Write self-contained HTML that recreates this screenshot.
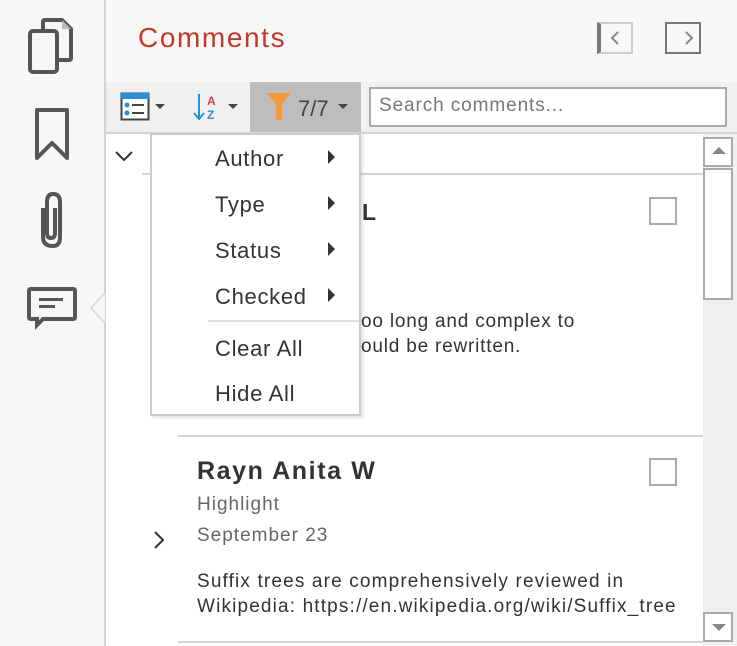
<!DOCTYPE html>
<html><head><style>
*{margin:0;padding:0;box-sizing:border-box}
body{width:737px;height:646px;overflow:hidden;background:#f7f7f7;font-family:"Liberation Sans",sans-serif;position:relative;color:#333}
.abs{position:absolute}
.t{position:absolute;white-space:nowrap}
.m{font-size:22px;color:#333;letter-spacing:0.7px}
</style></head><body>
<!-- sidebar -->
<div class="abs" style="left:104px;top:0;width:2px;height:646px;background:#d4d4d4"></div>
<svg class="abs" style="left:24px;top:16px" width="52" height="60" viewBox="0 0 52 60">
<path d="M19 13 V6 Q19 4 21 4 H38 L47 13 V42 Q47 44 45 44 H35" fill="none" stroke="#555" stroke-width="4"/>
<path d="M38 4 L47 13 H38Z" fill="#bbb"/>
<rect x="6" y="15" width="27" height="41" rx="3" fill="none" stroke="#555" stroke-width="4"/>
</svg>
<svg class="abs" style="left:34px;top:107px" width="36" height="54" viewBox="0 0 36 54"><path d="M3 3 H33 V51 L18 36 L3 51Z" fill="none" stroke="#555" stroke-width="4" stroke-linejoin="round"/></svg>
<svg class="abs" style="left:38px;top:190px" width="30" height="60" viewBox="0 0 30 60"><path d="M17 18 V43 Q17 48 13 48 Q9 48 9 43 V12 Q9 4 15 4 Q22 4 22 12 V47 Q22 56 15 56 Q5 56 5 47 V18" fill="none" stroke="#555" stroke-width="4"/></svg>
<svg class="abs" style="left:27px;top:287px" width="50" height="50" viewBox="0 0 50 50"><path d="M4 2 H46 Q48 2 48 4 V30 Q48 32 46 32 H16 L10 38 V32 H4 Q2 32 2 30 V4 Q2 2 4 2Z" fill="none" stroke="#555" stroke-width="4"/><rect x="12" y="11" width="24" height="3" fill="#555"/><rect x="12" y="18" width="16" height="3" fill="#555"/></svg>
<svg class="abs" style="left:89px;top:292px" width="17" height="32"><path d="M16 1 L2 16 L16 31" fill="#f7f7f7" stroke="#d4d4d4" stroke-width="1.5"/></svg>
<!-- header -->
<div class="t" style="left:138px;top:22px;font-size:28px;color:#c0392b;letter-spacing:1.6px">Comments</div>
<div class="abs" style="left:597px;top:22px;width:36px;height:32px;border:2px solid #ccc;border-left:4px solid #777"></div>
<svg class="abs" style="left:609px;top:30px" width="12" height="16"><path d="M9 2 L3 8 L9 14" fill="none" stroke="#888" stroke-width="2"/></svg>
<div class="abs" style="left:665px;top:22px;width:36px;height:32px;border:2px solid #777"></div>
<svg class="abs" style="left:683px;top:30px" width="12" height="16"><path d="M3 2 L9 8 L3 14" fill="none" stroke="#888" stroke-width="2"/></svg>
<!-- toolbar -->
<div class="abs" style="left:106px;top:82px;width:631px;height:52px;background:#f0f0f0;border-bottom:2px solid #d4d4d4"></div>
<svg class="abs" style="left:120px;top:92px" width="50" height="30"><rect x="1.5" y="1.5" width="27" height="26" fill="#fff" stroke="#444" stroke-width="2"/><rect x="1" y="1" width="28" height="6" fill="#2a8fd6"/><circle cx="7" cy="13" r="2.5" fill="#2a8fd6"/><circle cx="7" cy="21" r="2.5" fill="#2a8fd6"/><rect x="12" y="12" width="12" height="2" fill="#444"/><rect x="12" y="20" width="12" height="2" fill="#444"/><path d="M35 12 H45 L40 17Z" fill="#444"/></svg>
<svg class="abs" style="left:192px;top:92px" width="50" height="30"><path d="M7 2 V26 M2 21 L7 27 L12 21" fill="none" stroke="#2a8fd6" stroke-width="2"/><text x="15" y="13" font-family="Liberation Sans" font-size="12" font-weight="bold" fill="#e04040">A</text><text x="15" y="27" font-family="Liberation Sans" font-size="12" font-weight="bold" fill="#2a8fd6">Z</text><path d="M36 12 H46 L41 17Z" fill="#444"/></svg>
<div class="abs" style="left:250px;top:82px;width:111px;height:50px;background:#bdbdbb"></div>
<svg class="abs" style="left:266px;top:93px" width="28" height="28"><path d="M1 0 H25 L16 11 V27 H10 V11Z" fill="#f7963a"/></svg>
<div class="t" style="left:298px;top:96px;font-size:22px;color:#444">7/7</div>
<svg class="abs" style="left:338px;top:103px" width="12" height="8"><path d="M0 1 H10 L5 6Z" fill="#444"/></svg>
<div class="abs" style="left:369px;top:87px;width:358px;height:40px;background:#fff;border:2px solid #aaa"></div>
<div class="t" style="left:379px;top:95px;font-size:19px;color:#777;letter-spacing:0.9px">Search comments...</div>
<!-- list -->
<div class="abs" style="left:106px;top:134px;width:597px;height:512px;background:#fff"></div>
<svg class="abs" style="left:114px;top:149px" width="20" height="14"><path d="M2 3 L10 11 L18 3" fill="none" stroke="#333" stroke-width="2"/></svg>
<div class="abs" style="left:142px;top:173px;width:561px;height:2px;background:#d4d4d4"></div>
<div class="t" style="left:362px;top:199px;font-size:23px;font-weight:bold;color:#333">L</div>
<div class="abs" style="left:649px;top:197px;width:28px;height:28px;border:2px solid #aaa"></div>
<div class="t" style="left:361px;top:309px;font-size:19px;line-height:25px;color:#333;letter-spacing:0.8px">oo long and complex to<br>ould be rewritten.</div>
<div class="abs" style="left:178px;top:435px;width:525px;height:2px;background:#d4d4d4"></div>
<div class="t" style="left:197px;top:457px;font-size:25px;font-weight:bold;color:#333;letter-spacing:1.6px">Rayn Anita W</div>
<div class="abs" style="left:649px;top:458px;width:28px;height:28px;border:2px solid #aaa"></div>
<div class="t" style="left:197px;top:494px;font-size:19px;color:#666;letter-spacing:1px">Highlight</div>
<div class="t" style="left:197px;top:525px;font-size:19px;color:#666;letter-spacing:1px">September 23</div>
<svg class="abs" style="left:152px;top:530px" width="14" height="20"><path d="M3 2 L11 10 L3 18" fill="none" stroke="#333" stroke-width="2"/></svg>
<div class="t" style="left:197px;top:569px;font-size:19px;line-height:25px;color:#333;letter-spacing:1.15px">Suffix trees are comprehensively reviewed in<br>Wikipedia: https://en.wikipedia.org/wiki/Suffix_tree</div>
<div class="abs" style="left:178px;top:641px;width:525px;height:2px;background:#d4d4d4"></div>
<!-- scrollbar -->
<div class="abs" style="left:703px;top:134px;width:34px;height:512px;background:#f0f0f0"></div>
<div class="abs" style="left:703px;top:137px;width:30px;height:30px;border:2px solid #aaa;background:#fff"></div>
<svg class="abs" style="left:711px;top:146px" width="16" height="10"><path d="M1 8 H15 L8 1Z" fill="#888"/></svg>
<div class="abs" style="left:703px;top:168px;width:30px;height:132px;border:2px solid #aaa;background:#fff"></div>
<div class="abs" style="left:703px;top:612px;width:30px;height:30px;border:2px solid #aaa;background:#fff"></div>
<svg class="abs" style="left:711px;top:623px" width="16" height="10"><path d="M1 1 H15 L8 8Z" fill="#888"/></svg>
<!-- dropdown menu -->
<div class="abs" style="left:150px;top:133px;width:211px;height:283px;background:#fff;border:2px solid #ccc;box-shadow:2px 2px 3px rgba(0,0,0,0.12)"></div>
<div class="t m" style="left:215px;top:146px">Author</div>
<div class="t m" style="left:215px;top:192px">Type</div>
<div class="t m" style="left:215px;top:238px">Status</div>
<div class="t m" style="left:215px;top:284px">Checked</div>
<svg class="abs" style="left:327px;top:150px" width="10" height="160"><path d="M1 0 L8 7 L1 14Z M1 46 L8 53 L1 60Z M1 92 L8 99 L1 106Z M1 138 L8 145 L1 152Z" fill="#333"/></svg>
<div class="abs" style="left:208px;top:320px;width:151px;height:2px;background:#e0e0e0"></div>
<div class="t m" style="left:215px;top:336px">Clear All</div>
<div class="t m" style="left:215px;top:381px">Hide All</div>
</body></html>
